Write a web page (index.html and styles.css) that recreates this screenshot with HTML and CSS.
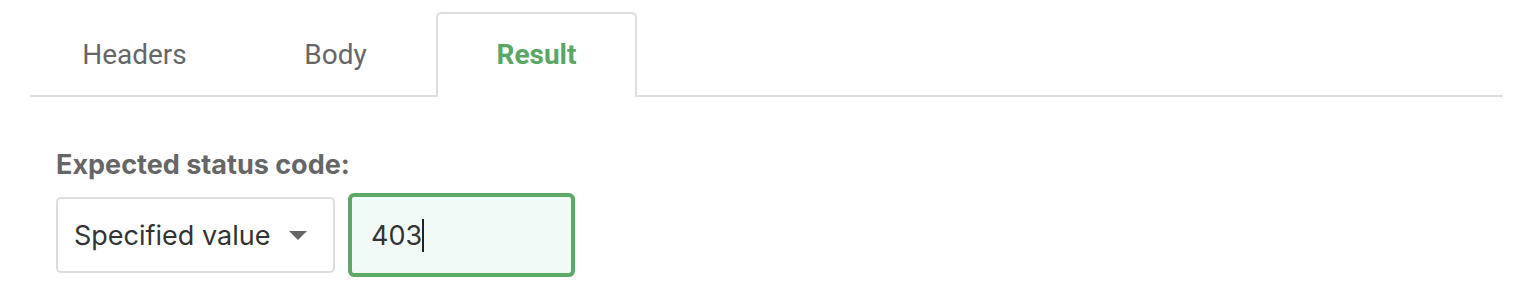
FILE: index.html
```html
<!DOCTYPE html>
<html>
<head>
<meta charset="utf-8">
<link rel="stylesheet" href="styles.css">
</head>
<body>
<div class="tabs">
  <div class="tab">Headers</div>
  <div class="tab">Body</div>
  <div class="tab active">Result</div>
</div>
<div class="form">
  <div class="label">Expected status code:</div>
  <div class="row">
    <div class="select">
      <span>Specified value</span>
      <svg class="caret" width="18" height="9" viewBox="0 0 18 9"><path d="M0 0 H18 L9 9 Z" fill="#666"/></svg>
    </div>
    <div class="input"><span>403</span><span class="cursor"></span></div>
  </div>
</div>
</body>
</html>
```
FILE: styles.css
```css
html, body {
  margin: 0;
  background: #fff;
}
body {
  font-family: Inter, "Liberation Sans", sans-serif;
}
.tabs {
  display: flex;
  margin: 0 25px 0 30px;
  padding: 12px 0 0 4px;
  border-bottom: 2px solid #ddd;
}
.tab {
  box-sizing: border-box;
  width: 201px;
  height: 83px;
  display: flex;
  align-items: center;
  justify-content: center;
  font-family: Roboto, "Liberation Sans", sans-serif;
  font-size: 28px;
  color: #666;
  border: 2px solid transparent;
  border-bottom: none;
}
.tab.active {
  height: 85px;
  margin-bottom: -2px;
  border-color: #ddd;
  border-radius: 5px 5px 0 0;
  background: #fff;
  color: #5aa664;
  font-weight: 700;
  padding-bottom: 2px;
}
.form {
  padding: 51px 0 0 56px;
}
.label {
  font-size: 27px;
  line-height: 34px;
  font-weight: 700;
  color: #666;
}
.row {
  display: flex;
  align-items: center;
  gap: 13px;
  margin-top: 11px;
}
.select {
  box-sizing: border-box;
  width: 279px;
  height: 76px;
  border: 2px solid #ddd;
  border-radius: 5px;
  display: flex;
  align-items: center;
  justify-content: space-between;
  padding: 0 26px 0 16px;
  font-size: 27px;
  color: #333;
}
.caret {
  display: block;
}
.input {
  box-sizing: border-box;
  width: 227px;
  height: 84px;
  border: 4px solid #5ea866;
  border-radius: 6px;
  background: #f1faf6;
  display: flex;
  align-items: center;
  padding-left: 19px;
  font-size: 27px;
  color: #333;
}
.cursor {
  display: block;
  width: 2px;
  height: 33px;
  background: #222;
  margin-left: 0;
}
```
